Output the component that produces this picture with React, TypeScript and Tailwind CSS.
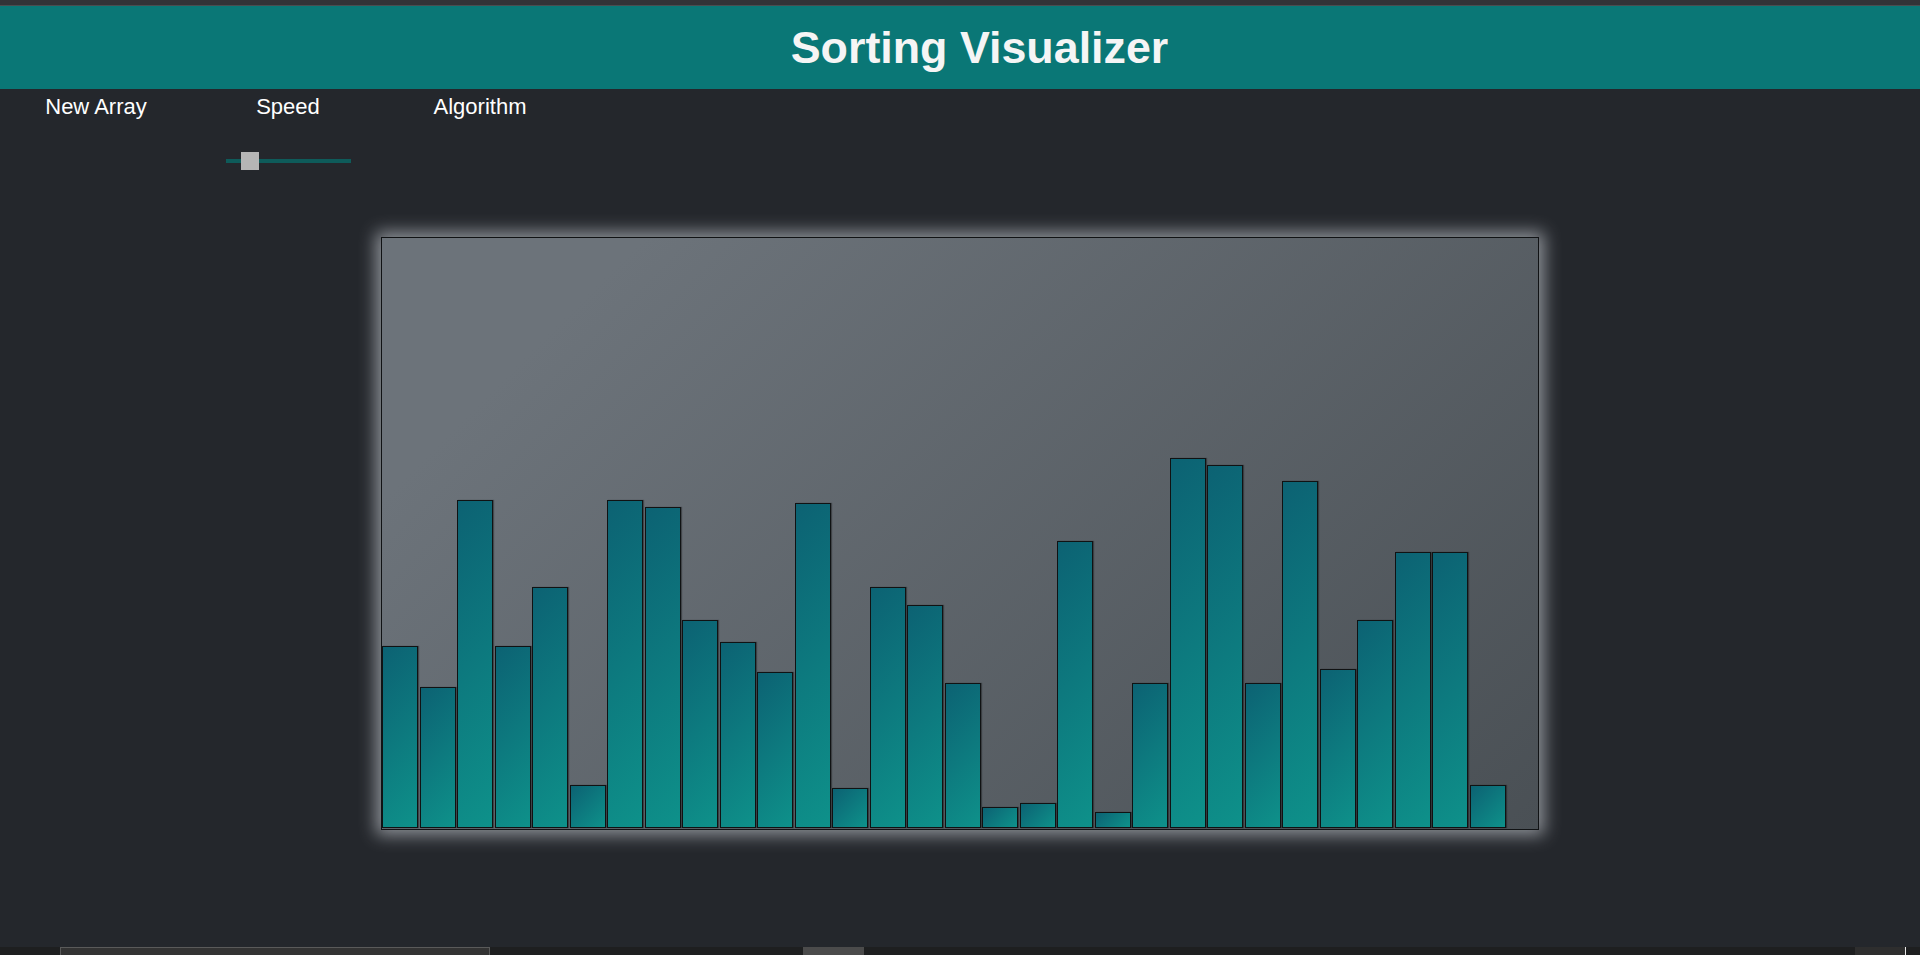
import React from "react";

const heights = [
  182, 141, 328, 182, 241, 43, 328, 321, 208, 186, 156, 325, 40, 241, 223, 145,
  21, 25, 287, 16, 145, 370, 363, 145, 347, 159, 208, 276, 276, 43,
];

const Bar: React.FC<{ height: number }> = ({ height }) => {
  return (
    <div
      className="w-[36px] mr-[1.5px] mb-[1px] shrink-0 border border-[#101213] bg-linear-[135deg] from-[#0c6273] to-[#0e918a] shadow-[1px_0_1px_rgba(0,0,0,0.35)]"
      style={{ height }}
    />
  );
};

const SpeedSlider: React.FC = () => {
  return (
    <div className="relative mx-auto mt-[29px] h-[18px] w-[125px]">
      <div className="absolute left-0 right-0 top-[7px] h-[4px] bg-[#0e5b5a]" />
      <div className="absolute left-[15px] top-0 h-[18px] w-[18px] bg-[#b5b5b5]" />
    </div>
  );
};

export default function App() {
  return (
    <div className="flex h-screen flex-col bg-[#24272c] font-['Liberation_Sans',Arial,sans-serif] text-white">
      <div className="h-[5px] bg-[#323337]" />
      <div className="h-[1px] bg-[#4a4d50]" />
      <header className="flex h-[83px] items-center justify-center bg-[#0a7776] pl-[39px]">
        <h1 className="text-[44.8px] font-bold text-[#f5f5f5]">Sorting Visualizer</h1>
      </header>

      <div className="flex h-[148px] pt-[1px]">
        <div className="w-[192px] text-center text-[22px]">New Array</div>
        <div className="w-[192px] text-center text-[22px]">
          <div>Speed</div>
          <SpeedSlider />
        </div>
        <div className="w-[192px] text-center text-[22px]">Algorithm</div>
      </div>

      <div className="mx-auto flex h-[593px] w-[1158px] items-end border border-[#111315] bg-linear-[135deg] from-[#6c737a] from-15% to-[#4a5055] shadow-[0_0_16px_5px_rgba(200,205,210,0.65)]">
        {heights.map((h, i) => (
          <Bar key={i} height={h} />
        ))}
      </div>

      <div className="flex-1" />

      <div className="flex h-[8px] bg-[#1e1f20]">
        <div className="w-[60px]" />
        <div className="w-[430px] border-x border-t border-[#5a5a5a] bg-[#333333]" />
        <div className="w-[313px]" />
        <div className="w-[61px] bg-[#4b4b4b]" />
        <div className="flex-1" />
        <div className="w-[50px] bg-[#2e2e2e]" />
        <div className="w-[1px] bg-[#e8e8e8]" />
        <div className="w-[14px]" />
      </div>
    </div>
  );
}
